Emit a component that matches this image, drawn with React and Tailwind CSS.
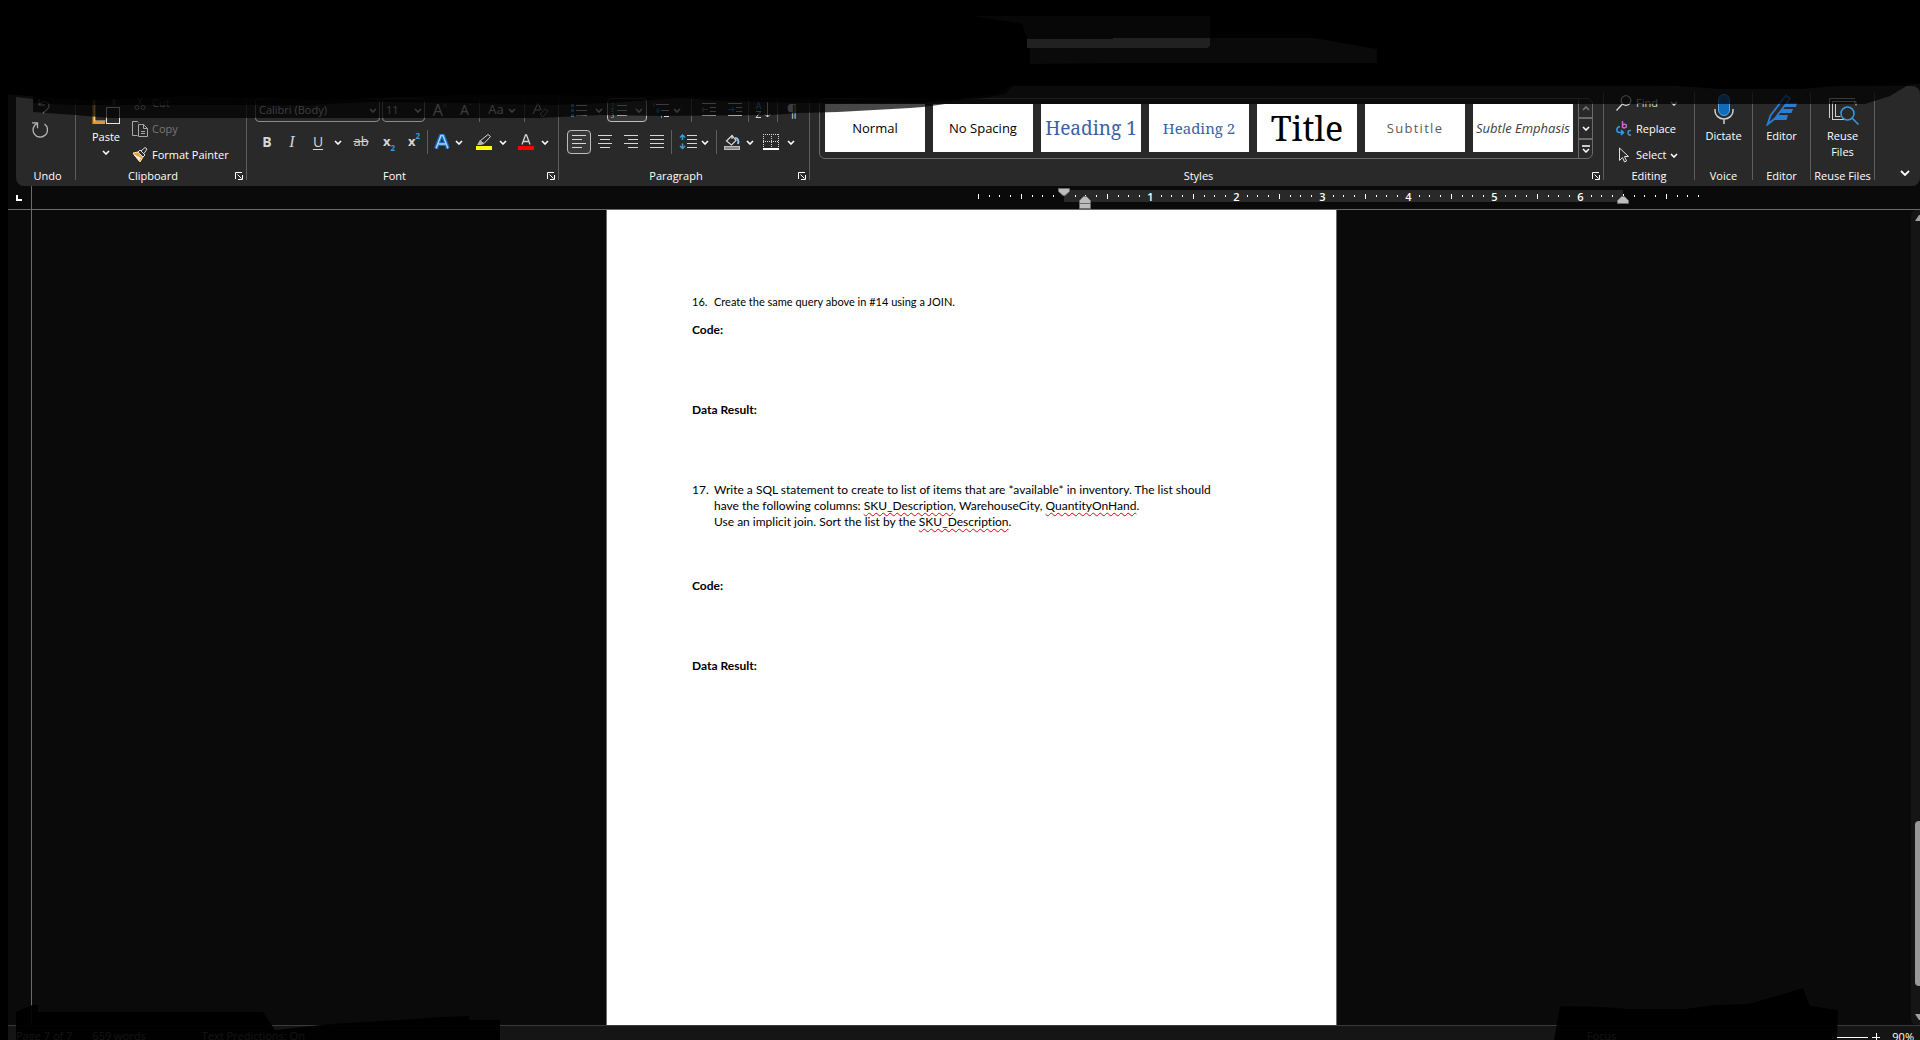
import React, { useState } from "react";

const STYLES = [
  { name: "Normal", className: "text-[13px] text-black" },
  { name: "No Spacing", className: "text-[13px] text-black" },
  { name: "Heading 1", className: "font-['Noto_Serif','Liberation_Serif',serif] text-[19px] text-[#3a62a3]" },
  { name: "Heading 2", className: "font-['Noto_Serif','Liberation_Serif',serif] text-[15px] text-[#3a62a3]" },
  { name: "Title", className: "font-['Noto_Serif','Liberation_Serif',serif] text-[34px] text-black" },
  { name: "Subtitle", className: "text-[13px] tracking-widest text-[#5a5a5a]" },
  { name: "Subtle Emphasis", className: "text-[13px] italic text-[#404040]" },
];

const Chevron = ({ className = "" }) => (
  <svg viewBox="0 0 8 5" className={`h-[5px] w-2 shrink-0 ${className}`} fill="none" stroke="currentColor" strokeWidth="1.6">
    <path d="M1 1l3 3 3-3" />
  </svg>
);

const Divider = () => <div className="my-1.5 w-px shrink-0 bg-[#5e5e5e]" />;

const SmallDivider = ({ className = "" }) => <div className={`h-6 w-px shrink-0 bg-[#5e5e5e] ${className}`} />;

const Launcher = ({ label }) => (
  <button type="button" aria-label={label} className="absolute right-[3px] top-1 h-2 w-2">
    <svg viewBox="0 0 8 8" className="h-2 w-2" fill="none" stroke="white">
      <path d="M.5 7V.5H7M2.5 2.5l4 4M7.5 3v4.500H3" />
    </svg>
  </button>
);

const Group = ({ title, className = "", launcher, children }) => (
  <section aria-label={title} className={`flex shrink-0 flex-col ${className}`}>
    <div className="h-[82px]">{children}</div>
    <div className={`relative h-4 text-center leading-4 ${launcher ? "pr-4" : ""}`}>
      {title}
      {launcher && <Launcher label={`${title} settings`} />}
    </div>
  </section>
);

const IconButton = ({ label, className = "w-6", children }) => (
  <button type="button" aria-label={label} className={`flex h-6 shrink-0 items-center justify-center ${className}`}>
    {children}
  </button>
);

const Lines = ({ rows }) => (
  <svg viewBox="0 0 16 16" className="h-4 w-4" stroke="#d6d6d6" strokeWidth="1">
    {rows.map(([x1, x2], i) => (
      <path key={i} d={`M${x1} ${1.5 + i * 4}H${x2}`} />
    ))}
  </svg>
);

const Undo = () => (
  <Group title="Undo" className="w-[59px] pl-1">
    <div className="flex flex-col items-start pl-3 pt-2">
      <IconButton label="Undo" className="w-6">
        <svg viewBox="0 0 16 16" className="h-4 w-4" fill="none" stroke="#d6d6d6" strokeWidth="1.2">
          <path d="M3 1v6h6M3 7c3-5 10-4 10 1 0 3-4 5-6 7" />
        </svg>
      </IconButton>
      <IconButton label="Repeat" className="w-4">
        <svg viewBox="0 0 16 16" className="h-4 w-4" fill="none" stroke="#b5b5b5" strokeWidth="1.3">
          <path d="M0 .8h5.500v5.500M5.500 1.200A7.200 7.200 0 1 0 12.500 2" />
        </svg>
      </IconButton>
    </div>
  </Group>
);

const Clipboard = () => (
  <Group title="Clipboard" className="w-[170px]" launcher>
    <div className="flex pl-3">
      <button type="button" className="flex w-9 flex-col items-center pt-3 leading-4">
        <svg viewBox="0 0 28 26" className="h-[26px] w-7" fill="none">
          <path d="M2 1v24h11" stroke="#e8962e" strokeWidth="3" />
          <path d="M2.500 1v22h11" stroke="#ffd08a" strokeWidth="1" />
          <path d="M22 1v6" stroke="#e8962e" strokeWidth="3" />
          <rect x="14.500" y="9.500" width="13" height="16" fill="#292929" stroke="#e4e4e4" />
        </svg>
        <span className="mt-[5px]">Paste</span>
        <Chevron className="mt-[5px]" />
      </button>
      <div className="ml-2 flex flex-col pt-1">
        <button type="button" className="flex h-[26px] items-center gap-1 text-[#d0d0d0]">
          <svg viewBox="0 0 16 16" className="h-4 w-4" fill="none" stroke="#bbb">
            <path d="M5 1l5 9M11 1L6 10" />
            <circle cx="5" cy="12.500" r="2" />
            <circle cx="11" cy="12.500" r="2" />
          </svg>
          Cut
        </button>
        <button type="button" className="flex h-[26px] items-center gap-1 text-[#767676]">
          <svg viewBox="0 0 16 16" className="h-4 w-4" fill="none" stroke="#a8a8a8">
            <path d="M5.500 14.500h-5v-14h5l1 1M9.500 3.500H6.500v12h9v-8l-4-4h-2M11.500 3.500v4h4M9 10.500h4M9 12.500h4" />
          </svg>
          Copy
        </button>
        <button type="button" className="flex h-[26px] items-center gap-1">
          <svg viewBox="0 0 16 16" className="h-4 w-4" fill="none">
            <path d="M1 6l5-1 5 5-3 5z" fill="#e9a23c" stroke="#ffdf9e" />
            <path d="M1 7l8 4-2 3z" fill="#fff0cf" />
            <path d="M6 5l2-2 5 5-2 2zM9 4l4-3.500 2 1.500-3 4.500" stroke="#dcdcdc" fill="#292929" />
          </svg>
          Format Painter
        </button>
      </div>
    </div>
  </Group>
);

const Font = () => {
  const [font, setFont] = useState("Calibri (Body)");
  const [size, setSize] = useState("11");

  return (
    <Group title="Font" className="w-[311px]" launcher>
      <div className="flex flex-col gap-2 pl-2 pt-3">
        <div className="flex items-center text-[#d6d6d6]">
          <div className="relative w-[125px]">
            <select
              aria-label="Font"
              value={font}
              onChange={(e) => setFont(e.target.value)}
              className="h-6 w-full appearance-none rounded border border-[#8a8a8a] px-[3px]"
            >
              <option>Calibri (Body)</option>
            </select>
            <Chevron className="pointer-events-none absolute right-[3px] top-[10px]" />
          </div>
          <div className="relative ml-[2px] w-[43px]">
            <select
              aria-label="Font size"
              value={size}
              onChange={(e) => setSize(e.target.value)}
              className="h-6 w-full appearance-none rounded border border-[#8a8a8a] px-[3px]"
            >
              <option>11</option>
            </select>
            <Chevron className="pointer-events-none absolute right-[3px] top-[10px]" />
          </div>
          <IconButton label="Increase font size" className="ml-[2px] w-[26px] text-base">A<sup className="text-[8px] text-[#3a9bdc]">^</sup></IconButton>
          <IconButton label="Decrease font size" className="w-[26px] text-sm">A<sup className="text-[8px] text-[#3a9bdc]">ˇ</sup></IconButton>
          <SmallDivider />
          <IconButton label="Change case" className="w-11 gap-1 text-[13px]">Aa <Chevron /></IconButton>
          <SmallDivider />
          <IconButton label="Clear formatting" className="ml-1 w-6">
            <svg viewBox="0 0 18 16" className="h-4 w-[18px]" fill="none" stroke="#d6d6d6">
              <path d="M1 12L6 1l3 7M3 8h5" />
              <path d="M8 12l5-5 3 2-5 6z" stroke="#c46bd0" />
            </svg>
          </IconButton>
        </div>
        <div className="flex items-center text-[#d6d6d6]">
          <IconButton label="Bold" className="w-6 text-sm font-bold">B</IconButton>
          <IconButton label="Italic" className="w-[26px] font-['Liberation_Serif',serif] text-base italic">I</IconButton>
          <IconButton label="Underline" className="w-[26px] text-sm underline underline-offset-2">U</IconButton>
          <IconButton label="Underline style" className="w-3.5 text-white"><Chevron /></IconButton>
          <IconButton label="Strikethrough" className="w-8 text-[13px] line-through">ab</IconButton>
          <IconButton label="Subscript" className="w-6 text-[13px] font-bold">
            x<span className="mt-3 text-[8px] text-[#3a9bdc]">2</span>
          </IconButton>
          <IconButton label="Superscript" className="w-[26px] text-[13px] font-bold">
            x<span className="mb-3 text-[8px] text-[#3a9bdc]">2</span>
          </IconButton>
          <SmallDivider />
          <IconButton label="Text effects" className="ml-1 w-5">
            <svg viewBox="0 0 16 16" className="h-4 w-4" fill="none">
              <path d="M2 14.500L7 1.500h2l5 13M4.500 10h7" stroke="#1670c4" strokeWidth="4" />
              <path d="M2 14.500L7 1.500h2l5 13M4.500 10h7" stroke="#a9d3f5" strokeWidth="1.4" />
            </svg>
          </IconButton>
          <IconButton label="Text effects menu" className="w-3.5 text-white"><Chevron /></IconButton>
          <IconButton label="Highlight" className="ml-1.5 w-6">
            <svg viewBox="0 0 16 16" className="h-4 w-4" fill="none">
              <path d="M4 7l8-6.500 2.500 2L8 9.500z" stroke="#d6d6d6" />
              <path d="M4 6l4 4-3 1H1z" fill="#b5b5b5" />
              <path d="M0 12h16v4H0z" fill="#ff0" />
            </svg>
          </IconButton>
          <IconButton label="Highlight colour" className="w-3.5 text-white"><Chevron /></IconButton>
          <IconButton label="Font colour" className="ml-1 w-6">
            <svg viewBox="0 0 16 16" className="h-4 w-4" fill="none">
              <path d="M4 10.500L7.500 1h1L12 10.500M5.500 7.500h5" stroke="#d6d6d6" strokeWidth="1.300" />
              <path d="M0 12h16v4H0z" fill="red" />
            </svg>
          </IconButton>
          <IconButton label="Font colour menu" className="w-3.5 text-white"><Chevron /></IconButton>
        </div>
      </div>
    </Group>
  );
};

const Paragraph = () => (
  <Group title="Paragraph" className="w-[250px]" launcher>
    <div className="flex flex-col gap-2 pl-2 pt-3">
      <div className="flex items-center text-[#d6d6d6]">
        <IconButton label="Bullets" className="w-10 gap-2">
          <svg viewBox="0 0 16 16" className="h-4 w-4" stroke="#d6d6d6">
            <path d="M5 3.500h11M5 8.500h11M5 13.500h11" />
            <path d="M0 3.500h3M0 8.500h3M0 13.500h3" stroke="#3a9bdc" strokeWidth="3" />
          </svg>
          <Chevron />
        </IconButton>
        <IconButton label="Numbering" className="w-10 gap-2 rounded border border-[#bdbdbd] bg-[#383838]">
          <svg viewBox="0 0 16 16" className="h-4 w-4" stroke="#d6d6d6" fill="none">
            <path d="M6 3.500h10M6 8.500h10M6 13.500h10" />
            <path d="M1 1.500h1v3M0 6.500h2.500l-2 3h2M0 11.500h2.500v4H0M1 13.500h1" stroke="#3a9bdc" />
          </svg>
          <Chevron />
        </IconButton>
        <IconButton label="Multilevel list" className="w-10 gap-1">
          <svg viewBox="0 0 16 16" className="h-4 w-4" stroke="#d6d6d6">
            <path d="M3 2.500h13M8 8.500h8M11 14.500h5" />
            <path d="M1 1v3M4 7h2v3H4zM8.500 13v3" stroke="#3a9bdc" />
          </svg>
          <Chevron />
        </IconButton>
        <SmallDivider className="ml-1" />
        <IconButton label="Decrease indent" className="ml-1 w-[26px]">
          <svg viewBox="0 0 16 16" className="h-4 w-4" stroke="#d6d6d6" fill="none">
            <path d="M1 1.500h14M9 5.500h6M9 9.500h6M1 13.500h14" />
            <path d="M7 7.500H1M3 5L1 7.500 3 10" stroke="#3a9bdc" />
          </svg>
        </IconButton>
        <IconButton label="Increase indent" className="w-[26px]">
          <svg viewBox="0 0 16 16" className="h-4 w-4" stroke="#d6d6d6" fill="none">
            <path d="M1 1.500h14M9 5.500h6M9 9.500h6M1 13.500h14" />
            <path d="M1 7.500h6M5 5l2 2.500L5 10" stroke="#3a9bdc" />
          </svg>
        </IconButton>
        <SmallDivider />
        <IconButton label="Sort" className="w-7">
          <svg viewBox="0 0 16 16" className="h-4 w-4" stroke="#d6d6d6" fill="none">
            <path d="M1 7l2.500-7L6 7M2 5h3" stroke="#3a9bdc" />
            <path d="M1 9.500h5l-5 6h5M12.500 0v15M9.500 12l3 3 3-3" />
          </svg>
        </IconButton>
        <SmallDivider />
        <IconButton label="Show marks" className="w-7 text-base">¶</IconButton>
      </div>
      <div className="flex items-center text-white">
        <IconButton label="Align left" className="w-6 rounded border border-[#bdbdbd] bg-[#383838]">
          <Lines rows={[[1, 15], [1, 11], [1, 15], [1, 11]]} />
        </IconButton>
        <IconButton label="Centre" className="ml-[2px] w-6">
          <Lines rows={[[1, 15], [3, 13], [1, 15], [3, 13]]} />
        </IconButton>
        <IconButton label="Align right" className="ml-[2px] w-6">
          <Lines rows={[[1, 15], [5, 15], [1, 15], [5, 15]]} />
        </IconButton>
        <IconButton label="Justify" className="ml-[2px] w-6">
          <Lines rows={[[1, 15], [1, 15], [1, 15], [1, 15]]} />
        </IconButton>
        <SmallDivider className="ml-[2px]" />
        <IconButton label="Line spacing" className="ml-1 w-9 gap-1">
          <svg viewBox="0 0 18 16" className="h-4 w-[18px]" stroke="#d6d6d6" fill="none">
            <path d="M8 1.500h10M8 5.500h10M8 9.500h10M8 13.500h10" />
            <path d="M3.500 1v5M1 3.500L3.500 1 6 3.500M3.500 9.500v5M1 12l2.500 2.500L6 12" stroke="#3a9bdc" strokeWidth="1.500" />
          </svg>
          <Chevron />
        </IconButton>
        <SmallDivider className="ml-1" />
        <IconButton label="Shading" className="ml-[2px] w-10 gap-1.5">
          <svg viewBox="0 0 16 16" className="h-4 w-4" fill="none">
            <path d="M2.500 7L8 1.500l4 5L7.500 11zM8 1v4" stroke="#d6d6d6" strokeWidth="1.200" />
            <path d="M11 4c3 0 4 3 3 6" stroke="#8ec3ee" strokeWidth="2" />
            <rect x=".5" y="12.500" width="15" height="3" fill="#8a8a8a" stroke="#bdbdbd" />
          </svg>
          <Chevron />
        </IconButton>
        <IconButton label="Borders" className="ml-[2px] w-9 gap-2">
          <svg viewBox="0 0 16 16" className="h-4 w-4" fill="none" stroke="#d6d6d6">
            <path d="M.5 0v14M15.500 0v14M0 .5h16M8.500 0v14M0 7.500h16" strokeDasharray="1 1" />
            <path d="M0 15h16" stroke="white" strokeWidth="2" />
          </svg>
          <Chevron />
        </IconButton>
      </div>
    </div>
  </Group>
);

const StyleGallery = () => (
  <Group title="Styles" className="min-w-0 flex-1" launcher>
    <div className="pl-[9px] pr-[10px] pt-3">
      <div className="flex h-[61px] rounded-md border border-[#6a6a6a]">
        <div className="flex min-w-0 flex-1 gap-2 overflow-hidden px-[5px] py-[5px]">
          {STYLES.map((style) => (
            <button
              key={style.name}
              type="button"
              className="flex h-12 min-w-0 flex-1 items-center justify-center overflow-hidden whitespace-nowrap bg-white"
            >
              <span className={`leading-[48px] ${style.className}`}>{style.name}</span>
            </button>
          ))}
        </div>
        <div className="flex w-3.5 flex-col divide-y-2 divide-[#6a6a6a] border-l border-[#6a6a6a]">
          <IconButton label="Previous styles" className="w-full flex-1 text-[#777]"><Chevron className="rotate-180" /></IconButton>
          <IconButton label="Next styles" className="w-full flex-1"><Chevron /></IconButton>
          <IconButton label="More styles" className="w-full flex-1">
            <svg viewBox="0 0 8 8" className="h-2 w-2" fill="none" stroke="white" strokeWidth="1.500">
              <path d="M0 1h8M1 4l3 3 3-3" />
            </svg>
          </IconButton>
        </div>
      </div>
    </div>
  </Group>
);

const Editing = () => (
  <Group title="Editing" className="w-[90px]">
    <div className="flex flex-col pl-3 pt-1">
      <button type="button" className="flex h-[26px] items-center gap-1 text-[#d6d6d6]">
        <svg viewBox="0 0 16 16" className="h-4 w-4" fill="none" stroke="#d6d6d6" strokeWidth="1.300">
          <circle cx="10" cy="5.500" r="4.800" />
          <path d="M6.500 9L.5 15.500" />
        </svg>
        Find <Chevron className="ml-2" />
      </button>
      <button type="button" className="flex h-[26px] items-center gap-1">
        <svg viewBox="0 0 16 16" className="h-4 w-4" fill="none" strokeWidth="1.500">
          <path d="M6.500 0v7M6.500 4.500c1-2 4-1.500 4 .5s-3 2.500-4 1" stroke="#c667d4" />
          <path d="M4 5.500C0 6 0 11 3 11.500h4M5 9l2.500 2.500L5 14M15 9.500c-4-1-4 5.500 0 4.500" stroke="#3a9bdc" />
        </svg>
        Replace
      </button>
      <button type="button" className="flex h-[26px] items-center gap-1">
        <svg viewBox="0 0 16 16" className="h-4 w-4" fill="none" stroke="#e0e0e0">
          <path d="M3.500 1v12.500l3-3 2 4.500 2-1-2-4.500h4z" />
        </svg>
        Select<Chevron />
      </button>
    </div>
  </Group>
);

const BigButton = ({ children, label }) => (
  <button type="button" className="flex w-full flex-col items-center pt-2 text-center leading-4">
    {children}
    <span className="mt-[2px]">{label}</span>
  </button>
);

const Ribbon = () => (
  <div className="ml-2 flex h-[100px] overflow-hidden rounded-lg bg-[#292929] text-white">
    <Undo />
    <Divider />
    <Clipboard />
    <Divider />
    <Font />
    <Divider />
    <Paragraph />
    <Divider />
    <StyleGallery />
    <Divider />
    <Editing />
    <Divider />
    <Group title="Voice" className="w-[57px]">
      <BigButton label="Dictate">
        <svg viewBox="0 0 32 32" className="h-8 w-8" fill="none">
          <rect x="10.500" y=".5" width="11" height="21" rx="5.500" fill="#0f6cbd" stroke="#58a6e6" />
          <path d="M7 15v2a9 8 0 0 0 18 0v-2M16 25v5" stroke="#cfcfcf" strokeWidth="1.500" />
        </svg>
      </BigButton>
    </Group>
    <Divider />
    <Group title="Editor" className="w-[57px]">
      <BigButton label="Editor">
        <svg viewBox="0 0 32 32" className="h-8 w-8" fill="none">
          <path d="M16 9h15l-1 4H14zM13 15h14l-1.500 4H10zM10 21h12l-1.500 5H7z" fill="#2b7cd3" />
          <path d="M1.500 30.500l3-9L20 1.500l4 3-15 20z" fill="#292929" stroke="#2b7cd3" strokeWidth="1.800" />
        </svg>
      </BigButton>
    </Group>
    <Divider />
    <Group title="Reuse Files" className="w-[63px] whitespace-nowrap">
      <BigButton label={<>Reuse<br />Files</>}>
        <svg viewBox="0 0 32 32" className="h-8 w-8" fill="none" stroke="#cfcfcf">
          <path d="M2.500 24V4.500H28M5.500 25.500v-18h22v2M8.500 23v-13" />
          <path d="M5 25.500h12M8.500 22.500h5M24 7.500H29v4" />
          <circle cx="20.500" cy="19.500" r="6.500" fill="#292929" stroke="#3a9bdc" strokeWidth="1.500" />
          <path d="M25 24l6.500 6.500" stroke="#3a9bdc" strokeWidth="1.500" />
        </svg>
      </BigButton>
    </Group>
    <Divider />
    <div className="flex w-[45px] shrink-0 items-end justify-end pb-2.5 pr-2.5">
      <button type="button" aria-label="Collapse ribbon">
        <svg viewBox="0 0 10 6" className="h-1.5 w-2.5" fill="none" stroke="white" strokeWidth="1.800">
          <path d="M1 1l4 4 4-4" />
        </svg>
      </button>
    </div>
  </div>
);

// one tick per eighth of an inch, starting an inch left of the margin
const TICKS = Array.from({ length: 68 }, (_, i) => i - 8);

const Tick = ({ value }) => {
  if (value > 0 && value <= 48 && value % 8 === 0) {
    return <span className="text-[11px] font-semibold leading-none">{value / 8}</span>;
  }
  if (value === 0) return <span />;
  return <span className={value % 4 === 0 ? "h-[5px] w-px bg-white" : "h-[2px] w-px bg-white"} />;
};

const Ruler = () => (
  <div className="flex h-6 border-b border-[#6a6a6a] text-white">
    <div className="flex w-6 shrink-0 items-center border-r border-[#6a6a6a] pl-2">
      <div className="h-1.5 w-1.5 border-b-2 border-l-2 border-white" />
    </div>
    <div className="flex flex-1 justify-end pr-[216px]">
      <div className="relative h-full w-[731px]">
        <div className="absolute left-[91px] top-1 h-3 w-[559px] bg-[#292929]" />
        <div className="relative grid h-5 grid-cols-[repeat(68,minmax(0,1fr))]">
          {TICKS.map((value) => (
            <div key={value} className="flex items-center justify-center">
              <Tick value={value} />
            </div>
          ))}
        </div>
        <svg viewBox="0 0 12 8" className="absolute left-[85px] top-[2px] h-2 w-3" fill="#bdbdbd" stroke="#6a6a6a">
          <path d="M.5.5h11v3L7 7.500H5L.5 3.500z" />
        </svg>
        <svg viewBox="0 0 12 13" className="absolute left-[106px] top-[10px] h-[13px] w-3" fill="#bdbdbd" stroke="#6a6a6a">
          <path d="M.5 12.500v-8l4-4h3l4 4v8zM.5 7.500h11" />
        </svg>
        <svg viewBox="0 0 12 8" className="absolute left-[644px] top-[10px] h-2 w-3" fill="#bdbdbd" stroke="#6a6a6a">
          <path d="M.5 7.500v-3l4-4h3l4 4v3z" />
        </svg>
      </div>
    </div>
  </div>
);

const Misspelled = ({ children }) => (
  <span className="underline decoration-red-600 decoration-wavy decoration-1 underline-offset-2">{children}</span>
);

const Page = () => (
  <article className="w-[731px] border-x border-[#6a6a6a] bg-white px-[85px] pt-[84px] font-['Lato','Carlito',sans-serif] text-xs leading-4 text-black [font-variant-ligatures:none]">
    <div className="flex text-[11px] leading-4">
      <span className="w-[22px] shrink-0">16.</span>
      <p>Create the same query above in #14 using a JOIN.</p>
    </div>
    <p className="mt-3 font-bold">Code:</p>
    <p className="mt-16 font-bold">Data Result:</p>
    <div className="mt-16 flex">
      <span className="w-[22px] shrink-0">17.</span>
      <p className="whitespace-nowrap">
        Write a SQL statement to create to list of items that are *available* in inventory. The list should
        <br />
        have the following columns: <Misspelled>SKU_Description</Misspelled>, WarehouseCity, <Misspelled>QuantityOnHand</Misspelled>.
        <br />
        Use an implicit join. Sort the list by the <Misspelled>SKU_Description</Misspelled>.
      </p>
    </div>
    <p className="mt-12 font-bold">Code:</p>
    <p className="mt-16 font-bold">Data Result:</p>
  </article>
);

const Scrollbar = () => (
  <div className="flex w-[9px] shrink-0 flex-col items-end rounded-l-md bg-[#151515] pt-[5px]">
    <svg viewBox="0 0 5 6" className="h-1.5 w-[5px]" fill="#a0a0a0">
      <path d="M0 6L4 0h1v6z" />
    </svg>
    <div className="min-h-0 flex-1" />
    <div className="h-[165px] w-[5px] rounded-l bg-[#999]" />
    <svg viewBox="0 0 5 6" className="mb-[5px] mt-7 h-1.5 w-[5px]" fill="#a0a0a0">
      <path d="M0 0l4 6h1V0z" />
    </svg>
  </div>
);

const StatusBar = () => (
  <footer className="flex h-[15px] shrink-0 overflow-hidden border-t border-[#3a3a3a] bg-[#151515] pl-2 leading-5 text-white">
    <span>Page 7 of 7</span>
    <span className="ml-5">659 words</span>
    <span className="ml-14">Text Predictions: On</span>
    <span className="ml-auto">Focus</span>
    <div className="ml-[220px] flex h-[22px] items-center pr-1.5">
      <input
        type="range"
        aria-label="Zoom"
        min={10}
        max={500}
        defaultValue={10}
        className="h-px w-8 appearance-none bg-white [&::-webkit-slider-thumb]:appearance-none"
      />
      <button type="button" aria-label="Zoom in" className="ml-1 mr-3 h-2 w-2">
        <svg viewBox="0 0 8 8" className="h-2 w-2" stroke="white">
          <path d="M0 4.500h8M4.500 0v8" />
        </svg>
      </button>
      <span>90%</span>
    </div>
  </footer>
);

// marker strokes that black out the title bar and parts of the ribbon
const TopMarker = () => (
  <svg viewBox="0 0 1920 120" className="pointer-events-none absolute left-0 top-0 h-[120px] w-[1920px] max-w-none">
    <path
      fillOpacity=".72"
      d="M8 72l8 25 17 2v13l42 3 35 3h430l60-3 60 1 110-1 30-2 38-1 72-4 13-1 15-2 7-1h920l25-8 20-12 10 0V0H8z"
    />
    <path
      fillOpacity=".7"
      d="M33 60v43l42 2h235l60-3 100 1 80 2 60-2 70-5 40 3 80 2h120l65-5 20-4 10-11V0H33z"
    />
    <path d="M0 0h1920v82l-60 2-60 5h-80l-70-5-640 1-12 8-40 6-320-3-160-2-150 6-140-4-100 4-88-6V70L8 66H0z" />
    <path d="M972 16h238v32h-183v-10l-5-14z" fill="#070707" />
    <path d="M1113 38h97v8l-3 2h-180v-9h86z" fill="#212121" />
    <path d="M1210 38h104l63 11v14h-240l-107 1v-16h180z" fill="#0a0a0a" />
  </svg>
);

const BottomMarker = () => (
  <svg viewBox="0 0 1920 60" className="pointer-events-none absolute bottom-0 left-0 h-[60px] w-[1920px] max-w-none">
    <path
      fillOpacity=".93"
      d="M16 32l16-7h6v7h225l12 18 55-6 70-4 40-3 29-1v4h31v20H16zM1560 26l43 1 25 2h57l30-4 33-1 29-8 26-8 7 18 28 4-1 30h-283z"
    />
  </svg>
);

export default function App() {
  return (
    <div className="relative flex h-screen flex-col overflow-hidden border-l-8 border-black bg-[#0a0a0a] font-['Open_Sans','Noto_Sans',sans-serif] text-[11px]">
      <header className="h-[86px] shrink-0" />
      <Ribbon />
      <Ruler />
      <main className="flex min-h-0 flex-1">
        <div className="w-6 shrink-0 border-r border-[#6a6a6a]" />
        <div className="flex flex-1 justify-center">
          <Page />
        </div>
        <Scrollbar />
      </main>
      <StatusBar />
      <div className="absolute -left-2 top-0">
        <TopMarker />
      </div>
      <div className="absolute -left-2 bottom-0">
        <BottomMarker />
      </div>
    </div>
  );
}
